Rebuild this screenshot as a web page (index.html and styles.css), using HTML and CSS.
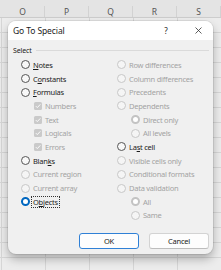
FILE: index.html
```html
<!DOCTYPE html>
<html>
<head>
<meta charset="utf-8">
<link rel="stylesheet" href="styles.css">
</head>
<body>
<div class="sheet">
  <div class="colhead"><span class="first">O</span><span>P</span><span>Q</span><span>R</span><span>S</span></div>
  <div class="cells"></div>
</div>
<div class="dialog">
  <div class="titlebar">
    <span class="title">Go To Special</span>
    <span class="help">?</span>
    <span class="close"><svg width="7" height="7" viewBox="0 0 7 7"><path d="M0.5 0.5L6.5 6.5M6.5 0.5L0.5 6.5" stroke="#333" stroke-width="0.8" fill="none"/></svg></span>
  </div>
  <div class="body">
    <div class="group"><span>Select</span><span class="rule"></span></div>
    <div class="options">
      <div class="col">
        <div class="opt"><span class="radio"></span><span><u>N</u>otes</span></div>
        <div class="opt"><span class="radio"></span><span>C<u>o</u>nstants</span></div>
        <div class="opt"><span class="radio"></span><span><u>F</u>ormulas</span></div>
        <div class="opt sub dis"><span class="check"><svg width="8" height="8" viewBox="0 0 8 8"><path d="M1.8 4.1L3.3 5.6L6.3 2.4" stroke="#fff" stroke-width="0.9" fill="none"/></svg></span><span>Numbers</span></div>
        <div class="opt sub dis"><span class="check"><svg width="8" height="8" viewBox="0 0 8 8"><path d="M1.8 4.1L3.3 5.6L6.3 2.4" stroke="#fff" stroke-width="0.9" fill="none"/></svg></span><span>Text</span></div>
        <div class="opt sub dis"><span class="check"><svg width="8" height="8" viewBox="0 0 8 8"><path d="M1.8 4.1L3.3 5.6L6.3 2.4" stroke="#fff" stroke-width="0.9" fill="none"/></svg></span><span>Logicals</span></div>
        <div class="opt sub dis"><span class="check"><svg width="8" height="8" viewBox="0 0 8 8"><path d="M1.8 4.1L3.3 5.6L6.3 2.4" stroke="#fff" stroke-width="0.9" fill="none"/></svg></span><span>Errors</span></div>
        <div class="opt"><span class="radio"></span><span>Blan<u>k</u>s</span></div>
        <div class="opt dis"><span class="radio"></span><span>Current region</span></div>
        <div class="opt dis"><span class="radio"></span><span>Current array</span></div>
        <div class="opt"><span class="radio on"></span><span class="focus">O<u>b</u>jects</span></div>
      </div>
      <div class="col">
        <div class="opt dis"><span class="radio"></span><span>Row differences</span></div>
        <div class="opt dis"><span class="radio"></span><span>Column differences</span></div>
        <div class="opt dis"><span class="radio"></span><span>Precedents</span></div>
        <div class="opt dis"><span class="radio"></span><span>Dependents</span></div>
        <div class="opt sub2 dis"><span class="radio on"></span><span>Direct only</span></div>
        <div class="opt sub2 dis"><span class="radio"></span><span>All levels</span></div>
        <div class="opt"><span class="radio"></span><span>La<u>s</u>t cell</span></div>
        <div class="opt dis"><span class="radio"></span><span>Visible cells only</span></div>
        <div class="opt dis"><span class="radio"></span><span>Conditional formats</span></div>
        <div class="opt dis"><span class="radio"></span><span>Data validation</span></div>
        <div class="opt sub2 dis"><span class="radio on"></span><span>All</span></div>
        <div class="opt sub2 dis"><span class="radio"></span><span>Same</span></div>
      </div>
    </div>
    <div class="buttons">
      <button class="btn default">OK</button>
      <button class="btn">Cancel</button>
    </div>
  </div>
</div>
</body>
</html>
```
FILE: styles.css
```css
html, body {
  margin: 0;
  padding: 0;
}
body {
  width: 221px;
  height: 270px;
  overflow: hidden;
  position: relative;
  font-family: "Noto Sans", "Open Sans", sans-serif;
  background: #ebebeb;
}
.sheet {
  width: 221px;
  height: 270px;
  display: flex;
  flex-direction: column;
}
.colhead {
  display: flex;
  height: 18px;
  box-sizing: border-box;
  padding-top: 6px;
  background: #e4e4e4;
  border-bottom: 1px solid #cdcdcd;
}
.colhead span {
  width: 44px;
  flex: none;
  text-align: center;
  font-size: 8.5px;
  line-height: 11px;
  color: #555;
  box-sizing: border-box;
  border-right: 1px solid #d2d2d2;
}
.colhead span.first {
  width: 45px;
  padding-left: 1px;
}
.cells {
  flex: 1;
  background-color: #ececec;
  background-image:
    linear-gradient(to right, #d6d6d6 1px, transparent 1px),
    linear-gradient(to bottom, #d6d6d6 1px, transparent 1px);
  background-size: 44px 15px, 44px 15px;
  background-position: 1px 0, 0 14px;
}
.dialog {
  position: absolute;
  left: 8px;
  top: 21px;
  width: 205px;
  height: 233px;
  border-radius: 8px;
  overflow: hidden;
  background: #f0f0f0;
  box-shadow: 0 5px 10px rgba(0, 0, 0, 0.28), 0 0 0 1px rgba(0, 0, 0, 0.07);
  display: flex;
  flex-direction: column;
  color: #1b1b1b;
}
.titlebar {
  height: 19px;
  flex: none;
  background: #fff;
  display: flex;
  align-items: center;
  padding-left: 5px;
  font-size: 8.5px;
}
.title {
  flex: 1;
  letter-spacing: -0.1px;
}
.help {
  width: 12px;
  text-align: center;
  font-size: 8px;
}
.close {
  width: 12px;
  margin-left: 20px;
  margin-right: 9px;
  display: flex;
  justify-content: center;
}
.body {
  flex: 1;
  display: flex;
  flex-direction: column;
  padding: 0 4px 5px 5px;
}
.group {
  display: flex;
  align-items: center;
  gap: 4px;
  height: 10px;
  margin-top: 5px;
  font-size: 7px;
  letter-spacing: -0.15px;
}
.rule {
  flex: 1;
  height: 1px;
  background: #dadada;
}
.options {
  display: grid;
  grid-template-columns: 96px 1fr;
  margin-top: 3px;
  padding-left: 8px;
}
.col {
  display: grid;
  grid-auto-rows: 13.7px;
}
.opt {
  display: flex;
  align-items: center;
  gap: 3px;
  font-size: 7.5px;
  letter-spacing: -0.25px;
  white-space: nowrap;
}
.opt u {
  text-decoration-thickness: 0.6px;
  text-underline-offset: 1px;
}
.opt.dis {
  color: #a3a3a3;
}
.opt.sub {
  padding-left: 13px;
}
.opt.sub2 {
  padding-left: 14px;
}
.radio {
  width: 9px;
  height: 9px;
  flex: none;
  box-sizing: border-box;
  border-radius: 50%;
  border: 1px solid #555;
  background: #f8f8f8;
}
.dis .radio {
  border-color: #c8c8c8;
  background: #f5f5f5;
}
.radio.on {
  border: 2.7px solid #0067c0;
  background: #fff;
}
.dis .radio.on {
  border: 2.5px solid #c3c3c3;
  background: #fff;
}
.check {
  width: 8px;
  height: 8px;
  flex: none;
  border-radius: 1.5px;
  background: #cacaca;
  display: flex;
}
.focus {
  outline: 1px dotted #333;
  outline-offset: 0;
  padding: 0 1px;
  margin-left: -1px;
}
.buttons {
  margin-top: auto;
  display: flex;
  justify-content: flex-end;
  gap: 10px;
}
.btn {
  width: 60px;
  height: 16px;
  padding: 0;
  box-sizing: border-box;
  border: 1px solid #d3d3d3;
  border-bottom-color: #bdbdbd;
  border-radius: 3px;
  background: #fdfdfd;
  font-family: inherit;
  font-size: 7.5px;
  letter-spacing: -0.2px;
  color: #1b1b1b;
}
.btn.default {
  border: 1px solid #2f80d6;
}
```
